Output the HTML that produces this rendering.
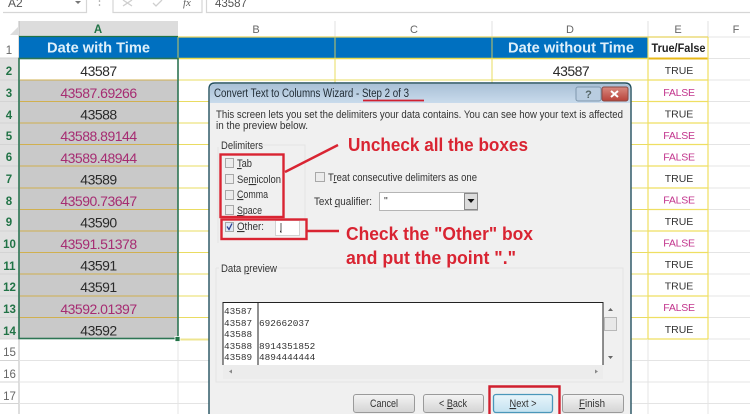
<!DOCTYPE html>
<html><head><meta charset="utf-8"><style>
html,body{margin:0;padding:0;background:#fff;width:750px;height:414px;overflow:hidden}
svg{display:block}
text{font-family:"Liberation Sans",sans-serif}
.n{font-size:14px;fill:#2a2a2a;text-anchor:middle;letter-spacing:-.5px}
.m{font-size:14px;fill:#a62c72;text-anchor:middle;letter-spacing:-.5px}
.t{font-size:10.5px;fill:#333;text-anchor:middle;letter-spacing:-.05px}
.f{font-size:10.5px;fill:#c2348c;text-anchor:middle;letter-spacing:-.25px}
.h{font-size:15px;font-weight:bold;fill:#dff0fa;text-anchor:middle}
.rh{font-size:11.5px;fill:#666;text-anchor:middle}
.rs{font-size:11.5px;fill:#217346;font-weight:bold;text-anchor:middle}
.ch{font-size:11px;fill:#666;text-anchor:middle}
.d{font-size:11px;fill:#333}
.mono{font-family:"Liberation Mono",monospace;font-size:9.4px;fill:#333}
.red{font-size:18px;font-weight:bold;fill:#d92432}
.b{font-size:11px;fill:#333;text-anchor:middle}
</style></head><body>
<svg width="750" height="414" viewBox="0 0 750 414" xmlns="http://www.w3.org/2000/svg">
<defs>
<linearGradient id="tb" x1="0" y1="0" x2="0" y2="1"><stop offset="0" stop-color="#a9c0d6"/><stop offset="1" stop-color="#c9dbec"/></linearGradient>
<linearGradient id="btn" x1="0" y1="0" x2="0" y2="1"><stop offset="0" stop-color="#f4f4f4"/><stop offset="1" stop-color="#d4d4d4"/></linearGradient>
<linearGradient id="nx" x1="0" y1="0" x2="0" y2="1"><stop offset="0" stop-color="#e8f5fb"/><stop offset="1" stop-color="#c4e2f0"/></linearGradient>
<linearGradient id="cl" x1="0" y1="0" x2="0" y2="1"><stop offset="0" stop-color="#d88a80"/><stop offset="1" stop-color="#b8423a"/></linearGradient>
</defs>
<!-- formula bar -->
<rect x="0" y="0" width="750" height="13" fill="#fff"/>
<path d="M3 12.500H86.500V0M113 0V12.500H202V0M206.500 0V12.500H750" fill="none" stroke="#d6d6d6" stroke-width="1.2"/>
<text x="8" y="7" font-size="12" fill="#555">A2</text>
<path d="M75 1l3 3 3-3z" fill="#777"/>
<circle cx="99.500" cy="1" r=".8" fill="#999"/><circle cx="99.500" cy="5" r=".8" fill="#999"/>
<path d="M123 0l9 6M132 0l-9 6" stroke="#cfcfcf" stroke-width="1.3"/>
<path d="M153 3l3 3 6-6" fill="none" stroke="#cfcfcf" stroke-width="1.3"/>
<text x="183" y="6" style="font-family:'Liberation Serif',serif;font-size:11px;font-style:italic" fill="#666">fx</text>
<text x="215" y="7" font-size="11.5" fill="#555">43587</text>
<!-- column headers -->
<rect x="19" y="21" width="159" height="16" fill="#dcdcdc"/>
<path d="M10 35H18V27z" fill="#dcdcdc"/>
<path d="M19 21V414" stroke="#bdbdbd"/>
<path d="M335 21V37M492 21V37M648 21V37M708 21V37" stroke="#e0e0e0"/>
<text x="98" y="33" font-size="11.5" font-weight="bold" fill="#217346" text-anchor="middle">A</text>
<text class="ch" x="256" y="33">B</text><text class="ch" x="414" y="33">C</text><text class="ch" x="570" y="33">D</text><text class="ch" x="678" y="33">E</text><text class="ch" x="736" y="33">F</text>
<!-- row 1 header band -->
<rect x="19" y="37" width="629" height="21" fill="#0070c0"/>
<rect x="648" y="37" width="60" height="21" fill="#fff"/>
<path d="M178 37H708" stroke="#e6d460" stroke-width="1.2"/>
<path d="M178 58.500H648" stroke="#e8d84a" stroke-width="1.6"/>
<path d="M648 58.500H708" stroke="#e8b818" stroke-width="2"/>
<path d="M178 37V58M335 37V58M492 37V58" stroke="#c8c860" stroke-width="1"/>
<path d="M19 36.500H178" stroke="#217346" stroke-width="1.2"/>
<text class="h" x="98.500" y="52.500" textLength="103" lengthAdjust="spacingAndGlyphs">Date with Time</text>
<text class="h" x="571" y="52.500" textLength="126" lengthAdjust="spacingAndGlyphs">Date without Time</text>
<text x="678.500" y="52" font-size="11.5" font-weight="bold" fill="#222" text-anchor="middle" textLength="54" lengthAdjust="spacingAndGlyphs">True/False</text>
<!-- Column A cells -->
<rect x="19" y="80" width="159" height="259" fill="#c9c9c9"/>
<!-- row header highlight -->
<rect x="0" y="58" width="19" height="281" fill="#e1e1e1"/>
<!-- grid lines -->
<g stroke="#eadc62" stroke-width="1">
<path d="M178 80H648M178 101.500H648M178 123H648M178 144.500H648M178 166H648M178 188H648M178 209.500H648M178 231H648M178 252.500H648M178 274H648M178 296H648M178 317.500H648M178 339H648"/>
<path d="M178 58V339M335 58V339M492 58V339"/>
</g>
<path d="M178 339.500H335" stroke="#eee590" stroke-width="2"/>
<g stroke="#d0b050" stroke-width="1">
<path d="M20 80H177M20 101.500H177M20 123H177M20 144.500H177M20 166H177M20 188H177M20 209.500H177M20 231H177M20 252.500H177M20 274H177M20 296H177M20 317.500H177"/>
</g>
<!-- F column + below grid -->
<g stroke="#e4e4e4" stroke-width="1">
<path d="M708 37H750M708 58.500H750M708 80H750M708 101.500H750M708 123H750M708 144.500H750M708 166H750M708 188H750M708 209.500H750M708 231H750M708 252.500H750M708 274H750M708 296H750M708 317.500H750M708 339H750"/>
<path d="M19 360.500H750M19 382H750M19 403.500H750"/>
<path d="M178 339V414M335 339V414M492 339V414M648 339V414M708 339V414"/>
</g>
<!-- E column yellow -->
<g stroke="#efdf62" stroke-width="1.2">
<path d="M648 37V339M708 37V339"/>
<path d="M648 80H708M648 101.500H708M648 123H708M648 144.500H708M648 166H708M648 188H708M648 209.500H708M648 231H708M648 252.500H708M648 274H708M648 296H708M648 317.500H708M648 339H708"/>
</g>
<!-- row numbers -->
<g>
<path d="M0 58H19M0 80H19M0 101.500H19M0 123H19M0 144.500H19M0 166H19M0 188H19M0 209.500H19M0 231H19M0 252.500H19M0 274H19M0 296H19M0 317.500H19M0 339H19M0 360.500H19M0 382H19M0 403.500H19" stroke="#d4d4d4"/>
<text class="rh" x="9" y="54">1</text>
<text class="rs" x="9" y="75">2</text><text class="rs" x="9" y="97">3</text><text class="rs" x="9" y="119">4</text><text class="rs" x="9" y="140">5</text><text class="rs" x="9" y="161">6</text><text class="rs" x="9" y="183">7</text><text class="rs" x="9" y="205">8</text><text class="rs" x="9" y="226">9</text>
<text class="rs" x="9.500" y="248">10</text><text class="rs" x="9.500" y="270">11</text><text class="rs" x="9.500" y="291">12</text><text class="rs" x="9.500" y="313">13</text><text class="rs" x="9.500" y="335">14</text>
<text class="rh" x="9.500" y="356">15</text><text class="rh" x="9.500" y="378">16</text><text class="rh" x="9.500" y="400">17</text>
</g>
<!-- A values -->
<text class="n" x="98.500" y="76">43587</text>
<text class="m" x="98.500" y="98">43587.69266</text>
<text class="n" x="98.500" y="119.500">43588</text>
<text class="m" x="98.500" y="141">43588.89144</text>
<text class="m" x="98.500" y="163">43589.48944</text>
<text class="n" x="98.500" y="184.500">43589</text>
<text class="m" x="98.500" y="206">43590.73647</text>
<text class="n" x="98.500" y="227.500">43590</text>
<text class="m" x="98.500" y="249">43591.51378</text>
<text class="n" x="98.500" y="270.500">43591</text>
<text class="n" x="98.500" y="292">43591</text>
<text class="m" x="98.500" y="314">43592.01397</text>
<text class="n" x="98.500" y="335.500">43592</text>
<!-- selection -->
<rect x="19" y="58.500" width="159" height="280" fill="none" stroke="#2e7554" stroke-width="1.6"/>
<rect x="175" y="336.500" width="5" height="5" fill="#217346" stroke="#fff" stroke-width=".8"/>
<text class="n" x="571" y="76">43587</text>
<!-- E values -->
<text class="t" x="679" y="74">TRUE</text>
<text class="f" x="679" y="96">FALSE</text>
<text class="t" x="679" y="117.500">TRUE</text>
<text class="f" x="679" y="139">FALSE</text>
<text class="f" x="679" y="160.500">FALSE</text>
<text class="t" x="679" y="182">TRUE</text>
<text class="f" x="679" y="203.500">FALSE</text>
<text class="t" x="679" y="225">TRUE</text>
<text class="f" x="679" y="246.500">FALSE</text>
<text class="t" x="679" y="268">TRUE</text>
<text class="t" x="679" y="289.500">TRUE</text>
<text class="f" x="679" y="311">FALSE</text>
<text class="t" x="679" y="333">TRUE</text>
<!-- Dialog -->
<path d="M209 420V89Q209 83 215 83H625Q631 83 631 89V420z" fill="#f0f0f0" stroke="#23505f" stroke-width="1.4"/>
<path d="M210 103V89Q210 84 215 84H625Q630 84 630 89V103z" fill="url(#tb)"/>
<text x="214" y="97" font-size="11.5" fill="#1f2a33" textLength="195" lengthAdjust="spacingAndGlyphs">Convert Text to Columns Wizard - Step 2 of 3</text>
<path d="M363 100.500H424" stroke="#d02030" stroke-width="1.8"/>
<rect x="576" y="87" width="25" height="14" rx="2" fill="#b9cde0" stroke="#7f98ae"/>
<text x="588.500" y="98" font-size="11" font-weight="bold" fill="#566" text-anchor="middle">?</text>
<rect x="602" y="87" width="26" height="14" rx="2" fill="url(#cl)" stroke="#8a4a44"/>
<path d="M611 91l7 6M618 91l-7 6" stroke="#fff" stroke-width="2"/>
<text class="d" x="216" y="118" textLength="407" lengthAdjust="spacingAndGlyphs">This screen lets you set the delimiters your data contains.  You can see how your text is affected</text>
<text class="d" x="216" y="129" textLength="92" lengthAdjust="spacingAndGlyphs">in the preview below.</text>
<!-- Delimiters group -->
<path d="M218 147V243M262 145H305V219" fill="none" stroke="#e4e4e4"/>
<text class="d" x="221" y="149" textLength="42" lengthAdjust="spacingAndGlyphs">Delimiters</text>
<g fill="#ececec" stroke="#a8a8a8">
<rect x="225.500" y="158.500" width="8" height="9"/>
<rect x="225.500" y="174.500" width="8" height="9"/>
<rect x="225.500" y="190.500" width="8" height="9"/>
<rect x="225.500" y="205.500" width="8" height="9"/>
<rect x="315.500" y="172.500" width="9" height="9"/>
</g>
<rect x="225.500" y="222.500" width="8" height="9" fill="#dfe8f5" stroke="#a8a8a8"/>
<path d="M227 226.500l2 3 3-6" fill="none" stroke="#2b3f8f" stroke-width="1.3"/>
<text class="d" x="237" y="167" textLength="15" lengthAdjust="spacingAndGlyphs"><tspan text-decoration="underline">T</tspan>ab</text>
<text class="d" x="237" y="183" textLength="44" lengthAdjust="spacingAndGlyphs">Se<tspan text-decoration="underline">m</tspan>icolon</text>
<text class="d" x="237" y="198" textLength="31" lengthAdjust="spacingAndGlyphs"><tspan text-decoration="underline">C</tspan>omma</text>
<text class="d" x="237" y="214" textLength="25" lengthAdjust="spacingAndGlyphs"><tspan text-decoration="underline">S</tspan>pace</text>
<text class="d" x="237" y="230" textLength="27" lengthAdjust="spacingAndGlyphs"><tspan text-decoration="underline">O</tspan>ther:</text>
<rect x="275.500" y="220.500" width="24" height="15" fill="#fff" stroke="#d2d2d2"/>
<text x="279" y="232" font-size="11" fill="#333">.</text>
<path d="M281 223V233" stroke="#333" stroke-width=".8"/>
<text class="d" x="328" y="181" textLength="149" lengthAdjust="spacingAndGlyphs">T<tspan text-decoration="underline">r</tspan>eat consecutive delimiters as one</text>
<text class="d" x="314" y="205" textLength="58" lengthAdjust="spacingAndGlyphs">Text <tspan text-decoration="underline">q</tspan>ualifier:</text>
<rect x="379.500" y="192.500" width="98" height="18" fill="#fff" stroke="#b5b5b5"/>
<rect x="464.500" y="193.500" width="13" height="16" fill="#dcdcdc" stroke="#8a8a8a"/>
<path d="M467.500 199h7l-3.500 4z" fill="#111"/>
<text x="384" y="204" font-size="10.500" fill="#333">"</text>
<!-- Red annotations -->
<g fill="none" stroke="#d92432" stroke-width="2.4">
<rect x="220.500" y="154.500" width="63" height="62.500"/>
<rect x="221.500" y="219.500" width="85" height="19.500"/>
</g>
<path d="M285 172L338 145" stroke="#d92432" stroke-width="2.4"/>
<path d="M307 231H339" stroke="#d92432" stroke-width="2.4"/>
<text class="red" x="348" y="151" textLength="180" lengthAdjust="spacingAndGlyphs">Uncheck all the boxes</text>
<text class="red" x="346" y="240" textLength="187" lengthAdjust="spacingAndGlyphs">Check the "Other" box</text>
<text class="red" x="346" y="264" textLength="170" lengthAdjust="spacingAndGlyphs">and put the point "."</text>
<!-- Data preview -->
<path d="M216 268H219M276 268H623V382H216V268" fill="none" stroke="#e4e4e4"/>
<text class="d" x="221" y="272" textLength="56" lengthAdjust="spacingAndGlyphs">Data <tspan text-decoration="underline">p</tspan>review</text>
<rect x="223" y="302" width="380" height="63" fill="#fff"/>
<path d="M223 365V302.500H603V365M258 302.500V365" fill="none" stroke="#222"/>
<text class="mono" x="224" y="314">43587</text>
<text class="mono" x="224" y="326">43587</text><text class="mono" x="259" y="326">692662037</text>
<text class="mono" x="224" y="337">43588</text>
<text class="mono" x="224" y="349">43588</text><text class="mono" x="259" y="349">8914351852</text>
<text class="mono" x="224" y="360">43589</text><text class="mono" x="259" y="360">4894444444</text>
<rect x="223" y="365" width="380" height="14" fill="#ececec"/>
<path d="M232 369.500v4l-3-2z" fill="#888"/>
<path d="M595 369.500v4l3-2z" fill="#888"/>
<rect x="604.500" y="317.500" width="12" height="13" fill="#e8e8e8" stroke="#b8b8b8"/>
<path d="M608 311h5l-2.500-3zM608 356h5l-2.500 3z" fill="#666"/>
<!-- Buttons -->
<rect x="353.500" y="394.500" width="61" height="18" rx="2.500" fill="url(#btn)" stroke="#9a9a9a"/>
<text class="b" x="384" y="407" textLength="28" lengthAdjust="spacingAndGlyphs">Cancel</text>
<rect x="423.500" y="394.500" width="60" height="18" rx="2.500" fill="url(#btn)" stroke="#9a9a9a"/>
<text class="b" x="453" y="407" textLength="28" lengthAdjust="spacingAndGlyphs">&lt; <tspan text-decoration="underline">B</tspan>ack</text>
<rect x="493.500" y="394.500" width="59" height="18" rx="2.500" fill="url(#nx)" stroke="#4a97ba" stroke-width="1.3"/>
<text class="b" x="523" y="407" textLength="27" lengthAdjust="spacingAndGlyphs"><tspan text-decoration="underline">N</tspan>ext &gt;</text>
<rect x="562.500" y="394.500" width="61" height="18" rx="2.500" fill="url(#btn)" stroke="#9a9a9a"/>
<text class="b" x="592" y="407" textLength="26" lengthAdjust="spacingAndGlyphs"><tspan text-decoration="underline">F</tspan>inish</text>
<path d="M489.500 416V386.500H559.500V416" fill="none" stroke="#d01f2e" stroke-width="2.4"/>
</svg>
</body></html>
